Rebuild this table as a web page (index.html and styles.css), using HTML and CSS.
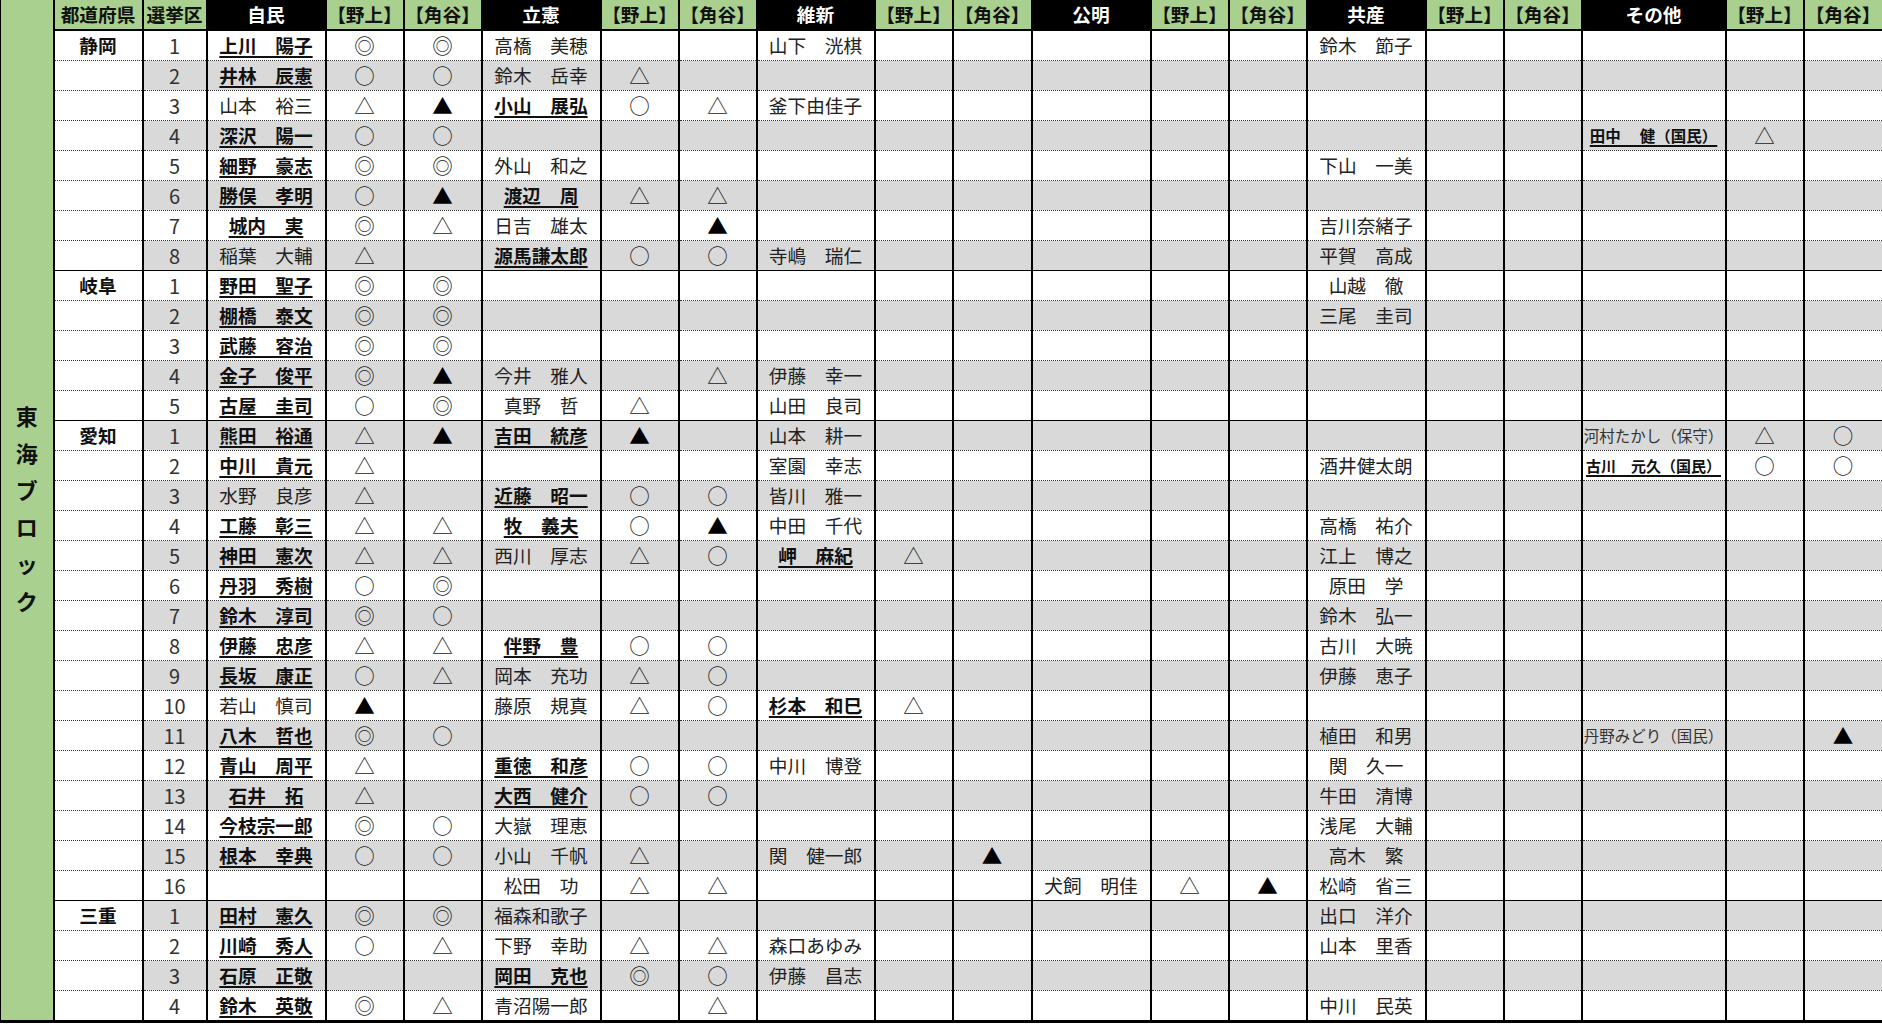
FILE: index.html
```html
<!DOCTYPE html>
<html lang="ja">
<head>
<meta charset="utf-8">
<title>東海ブロック</title>
<link rel="stylesheet" href="styles.css">
</head>
<body>
<table class="sheet">
<colgroup>
<col style="width:53px"><col style="width:89px"><col style="width:64px">
<col style="width:119px"><col style="width:78px"><col style="width:78px">
<col style="width:119px"><col style="width:78px"><col style="width:78px">
<col style="width:118px"><col style="width:78px"><col style="width:79px">
<col style="width:119px"><col style="width:78px"><col style="width:78px">
<col style="width:119px"><col style="width:78px"><col style="width:78px">
<col style="width:144px"><col style="width:78px"><col style="width:79px">
</colgroup>
<tbody>
<tr class="head">
<th rowspan="34" class="block"><div class="vt"><span>東</span><span>海</span><span>ブ</span><span>ロ</span><span>ッ</span><span>ク</span></div></th>
<th class="hg">都道府県</th><th class="hg">選挙区</th>
<th class="hb">自民</th><th class="hg">【野上】</th><th class="hg">【角谷】</th>
<th class="hb">立憲</th><th class="hg">【野上】</th><th class="hg">【角谷】</th>
<th class="hb">維新</th><th class="hg">【野上】</th><th class="hg">【角谷】</th>
<th class="hb">公明</th><th class="hg">【野上】</th><th class="hg">【角谷】</th>
<th class="hb">共産</th><th class="hg">【野上】</th><th class="hg">【角谷】</th>
<th class="hb">その他</th><th class="hg">【野上】</th><th class="hg">【角谷】</th>
</tr>
<!-- 静岡 -->
<tr class="first"><td class="pref">静岡</td><td class="d">1</td><td class="b">上川　陽子</td><td class="m">◎</td><td class="m">◎</td><td>高橋　美穂</td><td></td><td></td><td>山下　洸棋</td><td></td><td></td><td></td><td></td><td></td><td>鈴木　節子</td><td></td><td></td><td></td><td></td><td></td></tr>
<tr class="g"><td class="pref"></td><td class="d">2</td><td class="b">井林　辰憲</td><td class="m">○</td><td class="m">○</td><td>鈴木　岳幸</td><td class="m">△</td><td></td><td></td><td></td><td></td><td></td><td></td><td></td><td></td><td></td><td></td><td></td><td></td><td></td></tr>
<tr><td class="pref"></td><td class="d">3</td><td>山本　裕三</td><td class="m">△</td><td class="m k">▲</td><td class="b">小山　展弘</td><td class="m">○</td><td class="m">△</td><td>釜下由佳子</td><td></td><td></td><td></td><td></td><td></td><td></td><td></td><td></td><td></td><td></td><td></td></tr>
<tr class="g"><td class="pref"></td><td class="d">4</td><td class="b">深沢　陽一</td><td class="m">○</td><td class="m">○</td><td></td><td></td><td></td><td></td><td></td><td></td><td></td><td></td><td></td><td></td><td></td><td></td><td class="b bm">田中　 健（国民）</td><td class="m">△</td><td></td></tr>
<tr><td class="pref"></td><td class="d">5</td><td class="b">細野　豪志</td><td class="m">◎</td><td class="m">◎</td><td>外山　和之</td><td></td><td></td><td></td><td></td><td></td><td></td><td></td><td></td><td>下山　一美</td><td></td><td></td><td></td><td></td><td></td></tr>
<tr class="g"><td class="pref"></td><td class="d">6</td><td class="b">勝俣　孝明</td><td class="m">○</td><td class="m k">▲</td><td class="b">渡辺　周</td><td class="m">△</td><td class="m">△</td><td></td><td></td><td></td><td></td><td></td><td></td><td></td><td></td><td></td><td></td><td></td><td></td></tr>
<tr><td class="pref"></td><td class="d">7</td><td class="b">城内　実</td><td class="m">◎</td><td class="m">△</td><td>日吉　雄太</td><td></td><td class="m k">▲</td><td></td><td></td><td></td><td></td><td></td><td></td><td>吉川奈緒子</td><td></td><td></td><td></td><td></td><td></td></tr>
<tr class="g"><td class="pref"></td><td class="d">8</td><td>稲葉　大輔</td><td class="m">△</td><td></td><td class="b">源馬謙太郎</td><td class="m">○</td><td class="m">○</td><td>寺嶋　瑞仁</td><td></td><td></td><td></td><td></td><td></td><td>平賀　高成</td><td></td><td></td><td></td><td></td><td></td></tr>
<!-- 岐阜 -->
<tr class="first"><td class="pref">岐阜</td><td class="d">1</td><td class="b">野田　聖子</td><td class="m">◎</td><td class="m">◎</td><td></td><td></td><td></td><td></td><td></td><td></td><td></td><td></td><td></td><td>山越　徹</td><td></td><td></td><td></td><td></td><td></td></tr>
<tr class="g"><td class="pref"></td><td class="d">2</td><td class="b">棚橋　泰文</td><td class="m">◎</td><td class="m">◎</td><td></td><td></td><td></td><td></td><td></td><td></td><td></td><td></td><td></td><td>三尾　圭司</td><td></td><td></td><td></td><td></td><td></td></tr>
<tr><td class="pref"></td><td class="d">3</td><td class="b">武藤　容治</td><td class="m">◎</td><td class="m">◎</td><td></td><td></td><td></td><td></td><td></td><td></td><td></td><td></td><td></td><td></td><td></td><td></td><td></td><td></td><td></td></tr>
<tr class="g"><td class="pref"></td><td class="d">4</td><td class="b">金子　俊平</td><td class="m">◎</td><td class="m k">▲</td><td>今井　雅人</td><td></td><td class="m">△</td><td>伊藤　幸一</td><td></td><td></td><td></td><td></td><td></td><td></td><td></td><td></td><td></td><td></td><td></td></tr>
<tr><td class="pref"></td><td class="d">5</td><td class="b">古屋　圭司</td><td class="m">○</td><td class="m">◎</td><td>真野　哲</td><td class="m">△</td><td></td><td>山田　良司</td><td></td><td></td><td></td><td></td><td></td><td></td><td></td><td></td><td></td><td></td><td></td></tr>
<!-- 愛知 -->
<tr class="first g"><td class="pref">愛知</td><td class="d">1</td><td class="b">熊田　裕通</td><td class="m">△</td><td class="m k">▲</td><td class="b">吉田　統彦</td><td class="m k">▲</td><td></td><td>山本　耕一</td><td></td><td></td><td></td><td></td><td></td><td></td><td></td><td></td><td class="s">河村たかし（保守）</td><td class="m">△</td><td class="m">○</td></tr>
<tr><td class="pref"></td><td class="d">2</td><td class="b">中川　貴元</td><td class="m">△</td><td></td><td></td><td></td><td></td><td>室園　幸志</td><td></td><td></td><td></td><td></td><td></td><td>酒井健太朗</td><td></td><td></td><td class="b bs">古川　元久（国民）</td><td class="m">○</td><td class="m">○</td></tr>
<tr class="g"><td class="pref"></td><td class="d">3</td><td>水野　良彦</td><td class="m">△</td><td></td><td class="b">近藤　昭一</td><td class="m">○</td><td class="m">○</td><td>皆川　雅一</td><td></td><td></td><td></td><td></td><td></td><td></td><td></td><td></td><td></td><td></td><td></td></tr>
<tr><td class="pref"></td><td class="d">4</td><td class="b">工藤　彰三</td><td class="m">△</td><td class="m">△</td><td class="b">牧　義夫</td><td class="m">○</td><td class="m k">▲</td><td>中田　千代</td><td></td><td></td><td></td><td></td><td></td><td>高橋　祐介</td><td></td><td></td><td></td><td></td><td></td></tr>
<tr class="g"><td class="pref"></td><td class="d">5</td><td class="b">神田　憲次</td><td class="m">△</td><td class="m">△</td><td>西川　厚志</td><td class="m">△</td><td class="m">○</td><td class="b">岬　麻紀</td><td class="m">△</td><td></td><td></td><td></td><td></td><td>江上　博之</td><td></td><td></td><td></td><td></td><td></td></tr>
<tr><td class="pref"></td><td class="d">6</td><td class="b">丹羽　秀樹</td><td class="m">○</td><td class="m">◎</td><td></td><td></td><td></td><td></td><td></td><td></td><td></td><td></td><td></td><td>原田　学</td><td></td><td></td><td></td><td></td><td></td></tr>
<tr class="g"><td class="pref"></td><td class="d">7</td><td class="b">鈴木　淳司</td><td class="m">◎</td><td class="m">○</td><td></td><td></td><td></td><td></td><td></td><td></td><td></td><td></td><td></td><td>鈴木　弘一</td><td></td><td></td><td></td><td></td><td></td></tr>
<tr><td class="pref"></td><td class="d">8</td><td class="b">伊藤　忠彦</td><td class="m">△</td><td class="m">△</td><td class="b">伴野　豊</td><td class="m">○</td><td class="m">○</td><td></td><td></td><td></td><td></td><td></td><td></td><td>古川　大暁</td><td></td><td></td><td></td><td></td><td></td></tr>
<tr class="g"><td class="pref"></td><td class="d">9</td><td class="b">長坂　康正</td><td class="m">○</td><td class="m">△</td><td>岡本　充功</td><td class="m">△</td><td class="m">○</td><td></td><td></td><td></td><td></td><td></td><td></td><td>伊藤　恵子</td><td></td><td></td><td></td><td></td><td></td></tr>
<tr><td class="pref"></td><td class="d">10</td><td>若山　慎司</td><td class="m k">▲</td><td></td><td>藤原　規真</td><td class="m">△</td><td class="m">○</td><td class="b">杉本　和巳</td><td class="m">△</td><td></td><td></td><td></td><td></td><td></td><td></td><td></td><td></td><td></td><td></td></tr>
<tr class="g"><td class="pref"></td><td class="d">11</td><td class="b">八木　哲也</td><td class="m">◎</td><td class="m">○</td><td></td><td></td><td></td><td></td><td></td><td></td><td></td><td></td><td></td><td>植田　和男</td><td></td><td></td><td class="s">丹野みどり（国民）</td><td></td><td class="m k">▲</td></tr>
<tr><td class="pref"></td><td class="d">12</td><td class="b">青山　周平</td><td class="m">△</td><td></td><td class="b">重徳　和彦</td><td class="m">○</td><td class="m">○</td><td>中川　博登</td><td></td><td></td><td></td><td></td><td></td><td>関　久一</td><td></td><td></td><td></td><td></td><td></td></tr>
<tr class="g"><td class="pref"></td><td class="d">13</td><td class="b">石井　拓</td><td class="m">△</td><td></td><td class="b">大西　健介</td><td class="m">○</td><td class="m">○</td><td></td><td></td><td></td><td></td><td></td><td></td><td>牛田　清博</td><td></td><td></td><td></td><td></td><td></td></tr>
<tr><td class="pref"></td><td class="d">14</td><td class="b">今枝宗一郎</td><td class="m">◎</td><td class="m">○</td><td>大嶽　理恵</td><td></td><td></td><td></td><td></td><td></td><td></td><td></td><td></td><td>浅尾　大輔</td><td></td><td></td><td></td><td></td><td></td></tr>
<tr class="g"><td class="pref"></td><td class="d">15</td><td class="b">根本　幸典</td><td class="m">○</td><td class="m">○</td><td>小山　千帆</td><td class="m">△</td><td></td><td>関　健一郎</td><td></td><td class="m k">▲</td><td></td><td></td><td></td><td>高木　繁</td><td></td><td></td><td></td><td></td><td></td></tr>
<tr><td class="pref"></td><td class="d">16</td><td></td><td></td><td></td><td>松田　功</td><td class="m">△</td><td class="m">△</td><td></td><td></td><td></td><td>犬飼　明佳</td><td class="m">△</td><td class="m k">▲</td><td>松崎　省三</td><td></td><td></td><td></td><td></td><td></td></tr>
<!-- 三重 -->
<tr class="first g"><td class="pref thin">三重</td><td class="d">1</td><td class="b">田村　憲久</td><td class="m">◎</td><td class="m">◎</td><td>福森和歌子</td><td></td><td></td><td></td><td></td><td></td><td></td><td></td><td></td><td>出口　洋介</td><td></td><td></td><td></td><td></td><td></td></tr>
<tr><td class="pref"></td><td class="d">2</td><td class="b">川崎　秀人</td><td class="m">○</td><td class="m">△</td><td>下野　幸助</td><td class="m">△</td><td class="m">△</td><td>森口あゆみ</td><td></td><td></td><td></td><td></td><td></td><td>山本　里香</td><td></td><td></td><td></td><td></td><td></td></tr>
<tr class="g"><td class="pref"></td><td class="d">3</td><td class="b">石原　正敬</td><td></td><td></td><td class="b">岡田　克也</td><td class="m">◎</td><td class="m">○</td><td>伊藤　昌志</td><td></td><td></td><td></td><td></td><td></td><td></td><td></td><td></td><td></td><td></td><td></td></tr>
<tr class="last"><td class="pref"></td><td class="d">4</td><td class="b">鈴木　英敬</td><td class="m">◎</td><td class="m">△</td><td>青沼陽一郎</td><td></td><td class="m">△</td><td></td><td></td><td></td><td></td><td></td><td></td><td>中川　民英</td><td></td><td></td><td></td><td></td><td></td></tr>
</tbody>
</table>
</body>
</html>
```
FILE: styles.css
```css
html, body {
  margin: 0;
  padding: 0;
  background: #ffffff;
}

.sheet {
  border-collapse: collapse;
  table-layout: fixed;
  width: 1882px;
  font-family: "Noto Sans CJK JP", "Noto Sans", sans-serif;
  font-size: 18.67px;
  color: #222222;
  border-bottom: 3px solid #000000;
}

.sheet th,
.sheet td {
  padding: 0;
  text-align: center;
  vertical-align: middle;
  white-space: nowrap;
  overflow: hidden;
  line-height: 1;
  border-left: 2px solid #000000;
  border-right: 2px solid #000000;
}

.sheet td {
  height: 29px;
  border-top: 1px dotted #333333;
}

.head th {
  height: 29px;
  font-weight: 700;
  border-bottom: 2px solid #000000;
}

.hg {
  background: #a9d08e;
  color: #111111;
}

.hb {
  background: #000000;
  color: #ffffff;
}

.sheet th.block {
  background: #a9d08e;
  border-left: 1px solid #000000;
  border-bottom: 0;
  height: auto;
}

.vt {
  display: flex;
  flex-direction: column;
  align-items: center;
  font-size: 22px;
  font-weight: 700;
  line-height: 37px;
  color: #111111;
  padding-bottom: 4px;
}

.sheet tr.first td {
  border-top: 1px solid #000000;
}

.sheet tr.g td {
  background: #d9d9d9;
}

.sheet tr.g td.pref,
.sheet td.pref {
  background: #ffffff;
  font-weight: 700;
  color: #111111;
}

.sheet td.pref.thin {
  font-weight: 400;
}

.d {
  font-size: 20px;
  color: #333333;
}

.b {
  font-weight: 700;
  color: #111111;
  text-decoration: underline;
  text-decoration-thickness: 1.5px;
  text-underline-offset: 3px;
}

.bm {
  font-size: 15.5px;
}

.bs {
  font-size: 15px;
}

.s {
  font-size: 15.5px;
  color: #333333;
}

.m {
  font-size: 20.5px;
  color: #1a1a1a;
}

.m.k {
  color: #000000;
}
```
